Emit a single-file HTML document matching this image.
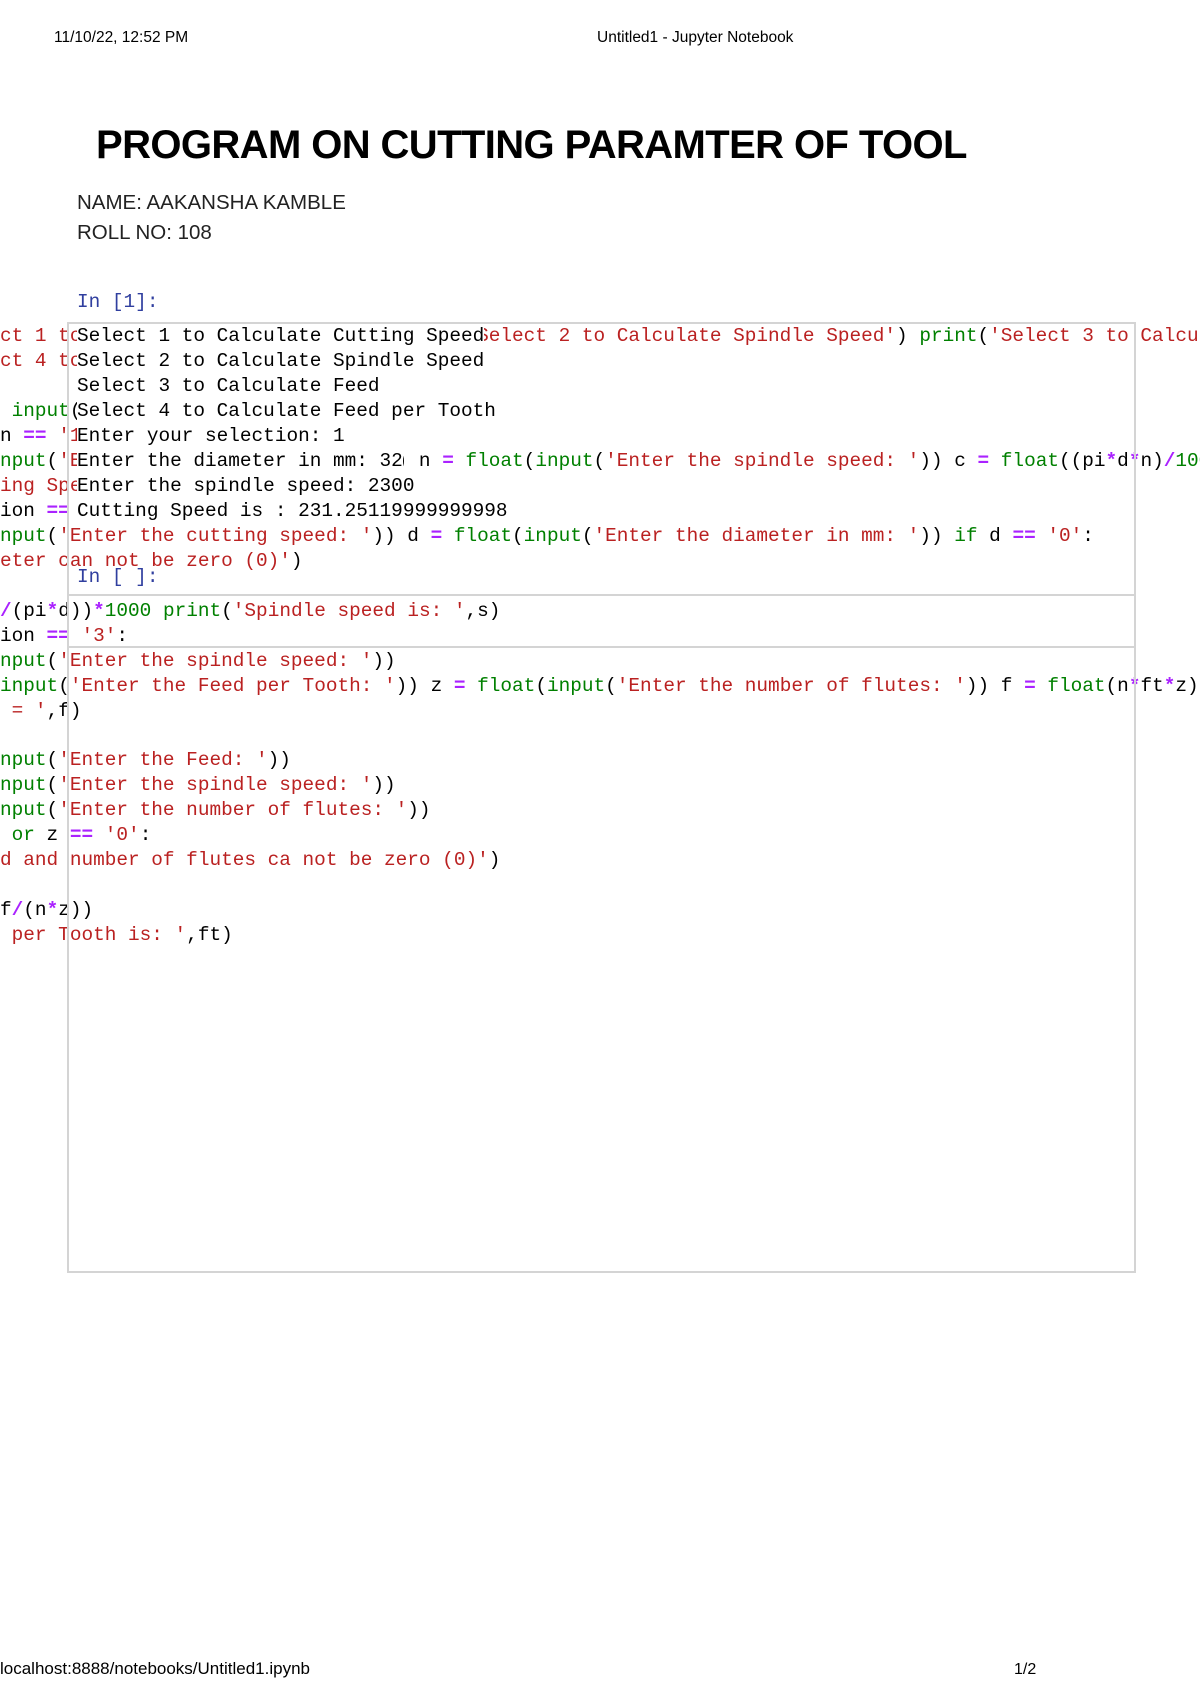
<!DOCTYPE html>
<html style="overflow:hidden"><head><meta charset="utf-8"><style>
html,body{overflow:hidden}
body{margin:0;width:1200px;height:1698px;background:#fff;position:relative;overflow:hidden;font-family:"Liberation Sans",sans-serif}
.a{position:absolute;white-space:pre}
.c{position:absolute;left:0;white-space:pre;font-family:"Liberation Mono",monospace;font-size:19.4px;line-height:25px;color:#000;max-width:1200px;overflow:hidden}
.o{position:absolute;left:77px;white-space:pre;font-family:"Liberation Mono",monospace;font-size:19.4px;line-height:25px;color:#000;background:#fff}
.s{color:#BA2121}.g{color:#008000}.p{color:#AA22FF;font-weight:bold}.b{color:#303F9F}
</style></head><body>
<div class="a" style="left:54px;top:29px;font-size:15.5px">11/10/22, 12:52 PM</div>
<div class="a" style="left:597px;top:29px;font-size:15.5px">Untitled1 - Jupyter Notebook</div>
<div class="a" style="left:96px;top:123px;font-size:40px;font-weight:bold;letter-spacing:-0.6px">PROGRAM ON CUTTING PARAMTER OF TOOL</div>
<div class="a" style="left:77px;top:191px;font-size:20.5px;color:#222">NAME: AAKANSHA KAMBLE</div>
<div class="a" style="left:77px;top:221px;font-size:20.5px;color:#222">ROLL NO: 108</div>
<div class="c b" style="left:77px;top:290px">In [1]:</div>

<div class="c" style="top:324px"><span class="s">ct 1 to Calculate Cutting Speed'</span>) <span class="g">print</span>(<span class="s">'Select 2 to Calculate Spindle Speed'</span>) <span class="g">print</span>(<span class="s">'Select 3 to Calculate Feed'</span>)</div>
<div class="c" style="top:349px"><span class="s">ct 4 to Calculate Feed per Tooth'</span>)</div>
<div class="c" style="top:399px"> <span class="g">input</span>(<span class="s">'Enter your selection: '</span>)<span class="g">!</span></div>
<div class="c" style="top:424px">n <span class="p">==</span> <span class="s">'1'</span>:</div>
<div class="c" style="top:449px"><span class="g">nput</span>(<span class="s">'Enter the diameter in mm: '</span>)) n <span class="p">=</span> <span class="g">float</span>(<span class="g">input</span>(<span class="s">'Enter the spindle speed: '</span>)) c <span class="p">=</span> <span class="g">float</span>((pi<span class="p">*</span>d<span class="p">*</span>n)<span class="p">/</span><span class="g">1000</span>)</div>
<div class="c" style="top:474px"><span class="s">ing Speed is : '</span>,c)</div>
<div class="c" style="top:499px">ion <span class="p">==</span> <span class="s">'2'</span>:</div>
<div class="c" style="top:524px"><span class="g">nput</span>(<span class="s">'Enter the cutting speed: '</span>)) d <span class="p">=</span> <span class="g">float</span>(<span class="g">input</span>(<span class="s">'Enter the diameter in mm: '</span>)) <span class="g">if</span> d <span class="p">==</span> <span class="s">'0'</span>:</div>
<div class="c" style="top:549px"><span class="s">eter can not be zero (0)'</span>)</div>
<div class="c" style="top:599px"><span class="p">/</span>(pi<span class="p">*</span>d))<span class="p">*</span><span class="g">1000</span> <span class="g">print</span>(<span class="s">'Spindle speed is: '</span>,s)</div>
<div class="c" style="top:624px">ion <span class="p">==</span> <span class="s">'3'</span>:</div>
<div class="c" style="top:649px"><span class="g">nput</span>(<span class="s">'Enter the spindle speed: '</span>))</div>
<div class="c" style="top:674px"><span class="g">input</span>(<span class="s">'Enter the Feed per Tooth: '</span>)) z <span class="p">=</span> <span class="g">float</span>(<span class="g">input</span>(<span class="s">'Enter the number of flutes: '</span>)) f <span class="p">=</span> <span class="g">float</span>(n<span class="p">*</span>ft<span class="p">*</span>z)</div>
<div class="c" style="top:699px"> <span class="s">= '</span>,f)</div>
<div class="c" style="top:748px"><span class="g">nput</span>(<span class="s">'Enter the Feed: '</span>))</div>
<div class="c" style="top:773px"><span class="g">nput</span>(<span class="s">'Enter the spindle speed: '</span>))</div>
<div class="c" style="top:798px"><span class="g">nput</span>(<span class="s">'Enter the number of flutes: '</span>))</div>
<div class="c" style="top:823px"> <span class="g">or</span> z <span class="p">==</span> <span class="s">'0'</span>:</div>
<div class="c" style="top:848px"><span class="s">d and number of flutes ca not be zero (0)'</span>)</div>
<div class="c" style="top:898px">f<span class="p">/</span>(n<span class="p">*</span>z))</div>
<div class="c" style="top:923px"> <span class="s">per Tooth is: '</span>,ft)</div>

<div class="o" style="top:324px">Select 1 to Calculate Cutting Speed</div>
<div class="o" style="top:349px">Select 2 to Calculate Spindle Speed</div>
<div class="o" style="top:374px">Select 3 to Calculate Feed</div>
<div class="o" style="top:399px">Select 4 to Calculate Feed per Tooth</div>
<div class="o" style="top:424px">Enter your selection: 1</div>
<div class="o" style="top:449px">Enter the diameter in mm: 32</div>
<div class="o" style="top:474px">Enter the spindle speed: 2300</div>
<div class="o" style="top:499px">Cutting Speed is : 231.25119999999998</div>
<div class="o b" style="top:565px;background:transparent">In [ ]:</div>

<div style="position:absolute;left:67px;top:322px;width:1065px;height:947px;border:2px solid #d4d4d4"></div>
<div style="position:absolute;left:67px;top:594px;width:1065px;height:50px;border:2px solid #d4d4d4"></div>

<div class="a" style="left:0;top:1659px;font-size:17px">localhost:8888/notebooks/Untitled1.ipynb</div>
<div class="a" style="left:1014px;top:1661px;font-size:16px">1/2</div>
</body></html>
